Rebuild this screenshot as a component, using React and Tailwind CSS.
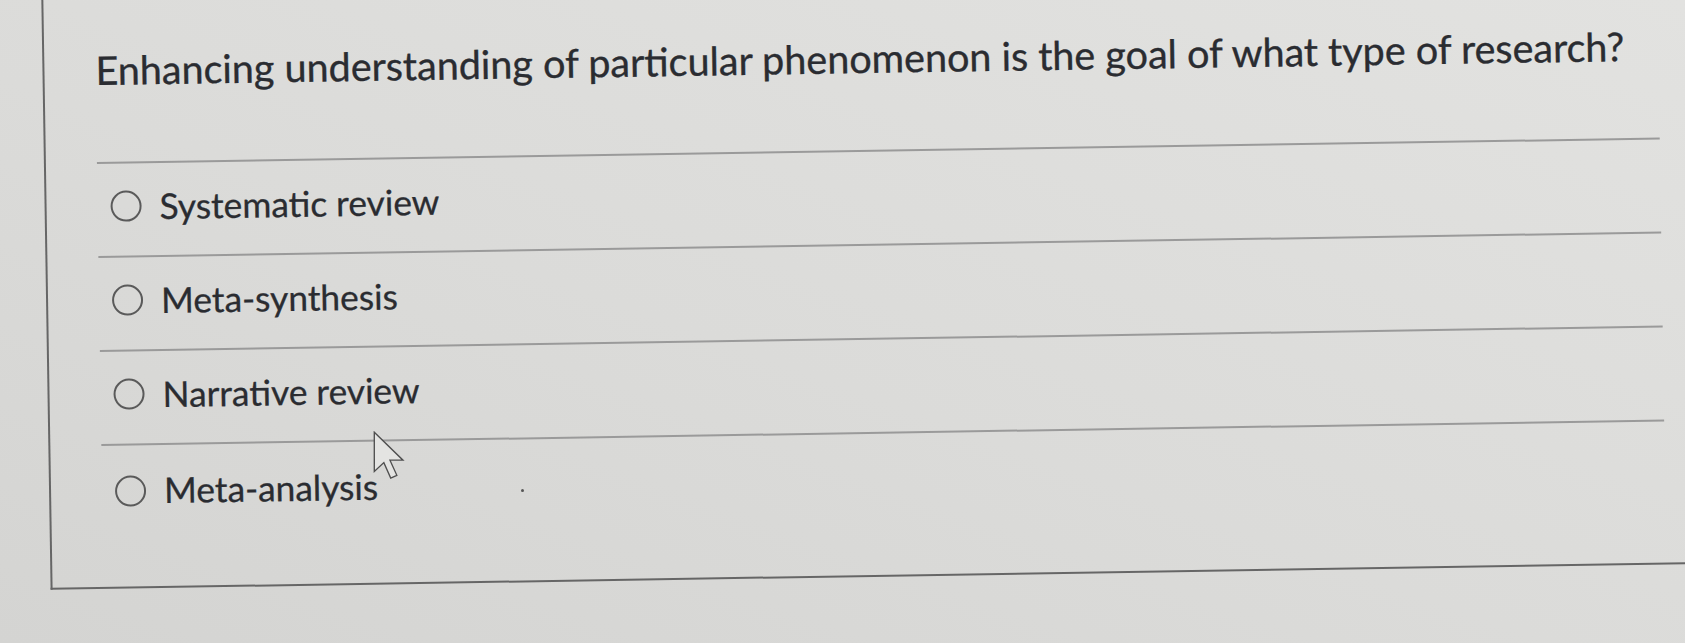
const options = ["Systematic review", "Meta-synthesis", "Narrative review", "Meta-analysis"];

function Radio() {
  return (
    <span className="shrink-0 w-[31px] h-[31px] rounded-full border-2 border-[#5a5a5a] ml-[13px] mr-[18px]" />
  );
}

export default function App() {
  return (
    <div
      className="relative w-full h-[643px] overflow-hidden bg-[linear-gradient(20deg,#d4d4d2_0%,#dbdbd9_45%,#e2e2e0_100%)] text-[#2a2c31]"
      style={{ fontFamily: "Lato, 'Open Sans', sans-serif" }}
    >
      {/* quiz card, tilted a little like the photo */}
      <div className="-mt-[40px] ml-[46px] w-[1700px] h-[617px] border-l-2 border-b-2 border-[#666] -rotate-[0.9deg] origin-[819px_330px]">
        <div className="ml-[51px] w-[1563px]">
          <div className="h-[192px] pt-[75px] border-b-2 border-[#9a9a9a]">
            <h1 className="text-[39.5px] leading-[46px] font-normal [-webkit-text-stroke:0.35px_#2a2c31]">
              Enhancing understanding of particular phenomenon is the goal of what type of research?
            </h1>
          </div>

          {options.map((opt, i) => (
            <div
              key={opt}
              className={
                i < 3
                  ? "h-[94px] pb-[7px] flex items-center border-b-2 border-[#9a9a9a]"
                  : "h-[90px] flex items-center"
              }
            >
              <Radio />
              <span className="text-[35.3px] leading-[42px] [-webkit-text-stroke:0.3px_#2a2c31]">{opt}</span>
            </div>
          ))}
        </div>
      </div>

      {/* mouse pointer */}
      <svg
        className="absolute left-[373px] top-[431px] w-[32px] h-[49px]"
        viewBox="0 0 13 20"
        fill="#e4e4e2"
        stroke="#4f4f4f"
        strokeWidth="0.55"
        strokeLinejoin="miter"
      >
        <path d="M0.5 0.5 L0.5 16.5 L4.4 12.9 L7.2 19.2 L9.7 18.1 L6.9 11.9 L12.2 11.9 Z" />
      </svg>

      {/* speck on the screen */}
      <span className="absolute left-[521px] top-[489px] w-[3px] h-[3px] rounded-full bg-[#555]" />
    </div>
  );
}
